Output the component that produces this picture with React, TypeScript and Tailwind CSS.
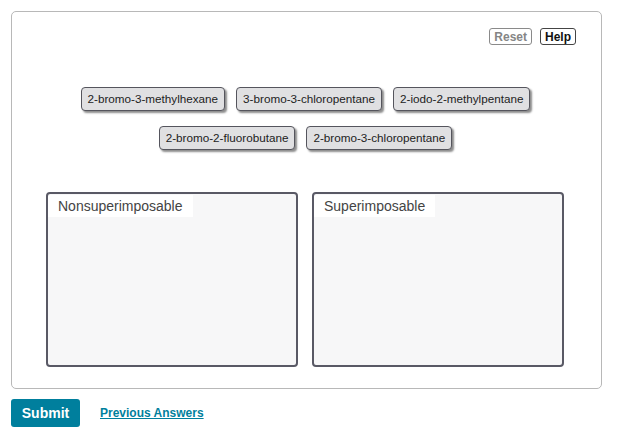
const chipsTop = [
  "2-bromo-3-methylhexane",
  "3-bromo-3-chloropentane",
  "2-iodo-2-methylpentane",
];
const chipsBottom = ["2-bromo-2-fluorobutane", "2-bromo-3-chloropentane"];

function Chip({ label }: { label: string }) {
  return (
    <div className="h-[24px] px-[6px] flex items-center rounded-[4px] border-[1.5px] border-[#55555d] bg-[#e0e0e2] text-[11.7px] text-[#222] shadow-[2px_2px_2px_rgba(0,0,0,0.45)] whitespace-nowrap">
      {label}
    </div>
  );
}

function DropBox({ label }: { label: string }) {
  return (
    <div className="w-[252px] h-[175px] rounded-[4px] border-2 border-[#595965] bg-[#f7f7f8]">
      <div className="inline-block bg-white px-[10px] pt-[3px] pb-[2px] text-[14px] leading-[17px] text-[#444] rounded-tl-[3px]">
        {label}
      </div>
    </div>
  );
}

export default function App() {
  return (
    <div
      className="w-[633px] h-[440px] bg-white pt-[11px] pl-[11px]"
      style={{ fontFamily: '"Liberation Sans", Arial, sans-serif' }}
    >
      <div className="w-[591px] h-[378px] rounded-[5px] border border-[#b8b8b8] flex flex-col">
        <div className="flex justify-end gap-[8px] pt-[16px] pr-[25px]">
          <button className="h-[17px] px-[4px] rounded-[3px] border border-[#8a8a8a] bg-white text-[12px] font-bold leading-none text-[#858585]">
            Reset
          </button>
          <button className="h-[17px] px-[4px] rounded-[3px] border border-[#444] bg-white text-[12px] font-bold leading-none text-[#111]">
            Help
          </button>
        </div>

        <div className="mt-[42px] flex flex-col items-center gap-[15px] pr-[2px]">
          <div className="flex gap-[11px]">
            {chipsTop.map((c) => (
              <Chip key={c} label={c} />
            ))}
          </div>
          <div className="flex gap-[11px]">
            {chipsBottom.map((c) => (
              <Chip key={c} label={c} />
            ))}
          </div>
        </div>

        <div className="mt-[42px] flex justify-center gap-[14px] pr-[3px]">
          <DropBox label="Nonsuperimposable" />
          <DropBox label="Superimposable" />
        </div>
      </div>

      <div className="mt-[10px] flex items-center gap-[20px]">
        <button className="w-[69px] h-[28px] rounded-[3px] bg-[#007f9d] text-white text-[14px] font-bold">
          Submit
        </button>
        <a className="text-[12px] font-bold text-[#007f9d] underline">Previous Answers</a>
      </div>
    </div>
  );
}
